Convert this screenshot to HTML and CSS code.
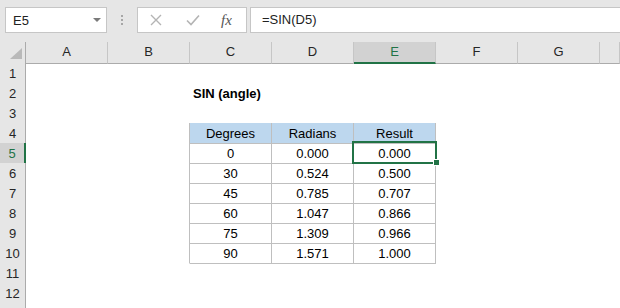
FILE: index.html
```html
<!DOCTYPE html>
<html lang="en">
<head>
    <meta charset="UTF-8">
    <title>SIN function</title>
    <link rel="stylesheet" href="styles.css">
</head>
<body>

<!-- formula bar -->
<div class="bar">
    <div class="namebox">
        <span>E5</span>
        <svg width="8" height="4" viewBox="0 0 8 4"><polygon points="0,0 8,0 4,4" fill="#7a7a7a"/></svg>
    </div>
    <div class="grip"><i></i><i></i><i></i></div>
    <div class="fxbtns">
        <svg class="cancel" width="12" height="12" viewBox="0 0 12 12"><path d="M1 1L11 11M11 1L1 11" stroke="#b4b4b4" stroke-width="1.4" fill="none"/></svg>
        <svg class="enter" width="14" height="12" viewBox="0 0 14 12"><path d="M1 6.5L5 10.5L13 1.5" stroke="#b4b4b4" stroke-width="1.6" fill="none"/></svg>
        <span class="fx">fx</span>
    </div>
    <div class="formula">=SIN(D5)</div>
</div>

<!-- sheet -->
<div class="sheet">
    <div class="row hdr">
        <div class="corner"><svg width="12" height="11" viewBox="0 0 12 11"><polygon points="12,0 12,11 0,11" fill="#b9b9b9"/></svg></div>
        <div>A</div><div>B</div><div>C</div><div>D</div><div class="on">E</div><div>F</div><div>G</div><div></div>
    </div>
    <div class="row"><div class="rh">1</div><div></div><div></div><div></div><div></div><div></div><div></div><div></div><div></div></div>
    <div class="row"><div class="rh">2</div><div></div><div></div><div class="title">SIN (angle)</div><div></div><div></div><div></div><div></div><div></div></div>
    <div class="row"><div class="rh">3</div><div></div><div></div><div class="top"></div><div class="top"></div><div class="top"></div><div></div><div></div><div></div></div>
    <div class="row"><div class="rh">4</div><div></div><div class="left"></div><div class="t th">Degrees</div><div class="t th">Radians</div><div class="t th">Result</div><div></div><div></div><div></div></div>
    <div class="row"><div class="rh on">5</div><div></div><div class="left"></div><div class="t">0</div><div class="t">0.000</div>
        <div class="t pick"><span class="cursor"><i class="handle"></i></span>0.000</div><div></div><div></div><div></div></div>
    <div class="row"><div class="rh">6</div><div></div><div class="left"></div><div class="t">30</div><div class="t">0.524</div><div class="t">0.500</div><div></div><div></div><div></div></div>
    <div class="row"><div class="rh">7</div><div></div><div class="left"></div><div class="t">45</div><div class="t">0.785</div><div class="t">0.707</div><div></div><div></div><div></div></div>
    <div class="row"><div class="rh">8</div><div></div><div class="left"></div><div class="t">60</div><div class="t">1.047</div><div class="t">0.866</div><div></div><div></div><div></div></div>
    <div class="row"><div class="rh">9</div><div></div><div class="left"></div><div class="t">75</div><div class="t">1.309</div><div class="t">0.966</div><div></div><div></div><div></div></div>
    <div class="row"><div class="rh">10</div><div></div><div class="left"></div><div class="t">90</div><div class="t">1.571</div><div class="t">1.000</div><div></div><div></div><div></div></div>
    <div class="row"><div class="rh">11</div><div></div><div></div><div></div><div></div><div></div><div></div><div></div><div></div></div>
    <div class="row"><div class="rh">12</div><div></div><div></div><div></div><div></div><div></div><div></div><div></div><div></div></div>
    <!-- row 13: only its top edge shows in the window -->
    <div class="row"><div class="rh"></div><div></div><div></div><div></div><div></div><div></div><div></div><div></div><div></div></div>
</div>

</body>
</html>
```

FILE: styles.css
```css
body {
    margin: 0;
    width: 620px;
    height: 308px;
    overflow: hidden;
    background: #fff;
    color: #000;
    font-family: "Liberation Sans", Arial, sans-serif;
    font-size: 13px;
}

/* formula bar */
.bar {
    display: flex;
    align-items: flex-start;
    height: 42px;
    box-sizing: border-box;
    padding: 7px 0 0 5px;
    background: #e6e6e6;
}
.namebox {
    width: 102px;
    height: 26px;
    box-sizing: border-box;
    display: flex;
    align-items: center;
    justify-content: space-between;
    padding: 0 5px 0 7px;
    border: 1px solid #c6c6c6;
    background: #fff;
    color: #222;
}
.grip {
    display: flex;
    flex-direction: column;
    gap: 2px;
    margin: 8px 0 0 14px;
}
.grip i {
    width: 2px;
    height: 2px;
    background: #a6a6a6;
}
.fxbtns {
    width: 110px;
    height: 26px;
    box-sizing: border-box;
    margin-left: 14px;
    display: flex;
    align-items: center;
    padding-left: 12px;
    border: 1px solid #c6c6c6;
    background: #fff;
}
.enter {
    margin-left: 24px;
}
.fx {
    margin-left: 21px;
    font-family: "Liberation Serif", "Times New Roman", serif;
    font-style: italic;
    font-size: 15px;
    color: #555;
}
.formula {
    flex: 1;
    height: 26px;
    box-sizing: border-box;
    margin-left: 3px;
    padding-left: 11px;
    line-height: 24px;
    border: 1px solid #c6c6c6;
    border-right: none;
    background: #fff;
    color: #222;
}

/* grid */
.row {
    display: grid;
    grid-template-columns: 26px repeat(7, 82px) 1fr;
    height: 20px;
}
.row > div {
    box-sizing: border-box;
    padding-top: 1px;
    line-height: 19px;
    white-space: nowrap;
    text-align: center;
    border-right: 1px solid transparent;
    border-bottom: 1px solid transparent;
}
.hdr {
    height: 21px;
}
.hdr > div {
    padding-top: 0;
    line-height: 20px;
    color: #262626;
    background: #e6e6e6;
    border-right-color: #c6c6c6;
    border-bottom-color: #ababab;
}
.hdr > .corner {
    display: flex;
    justify-content: flex-end;
    align-items: flex-end;
    padding: 0 3px 4px 0;
    border-right-color: #ababab;
}
.hdr > .on {
    background: #d2d2d2;
    color: #217346;
    border-bottom: 2px solid #217346;
}
.row > .rh {
    color: #262626;
    background: #e6e6e6;
    border-right-color: #ababab;
    border-bottom-color: #c6c6c6;
}
.row > .rh.on {
    background: #d2d2d2;
    color: #217346;
    border-right: 2px solid #217346;
}

/* table */
.row > .title {
    text-align: left;
    padding-left: 3px;
    font-weight: bold;
}
.row > .top {
    border-bottom-color: #bfbfbf;
}
.row > .left {
    border-right-color: #bfbfbf;
}
.row > .t {
    border-right-color: #bfbfbf;
    border-bottom-color: #bfbfbf;
}
.row > .th {
    background: #bdd7ee;
}

/* active cell */
.pick {
    position: relative;
}
.cursor {
    position: absolute;
    left: -2px;
    top: -2px;
    width: 85px;
    height: 23px;
    box-sizing: border-box;
    border: 2px solid #217346;
}
.handle {
    position: absolute;
    left: 79px;
    top: 16px;
    width: 5px;
    height: 5px;
    background: #217346;
    border: 1px solid #fff;
}
```
